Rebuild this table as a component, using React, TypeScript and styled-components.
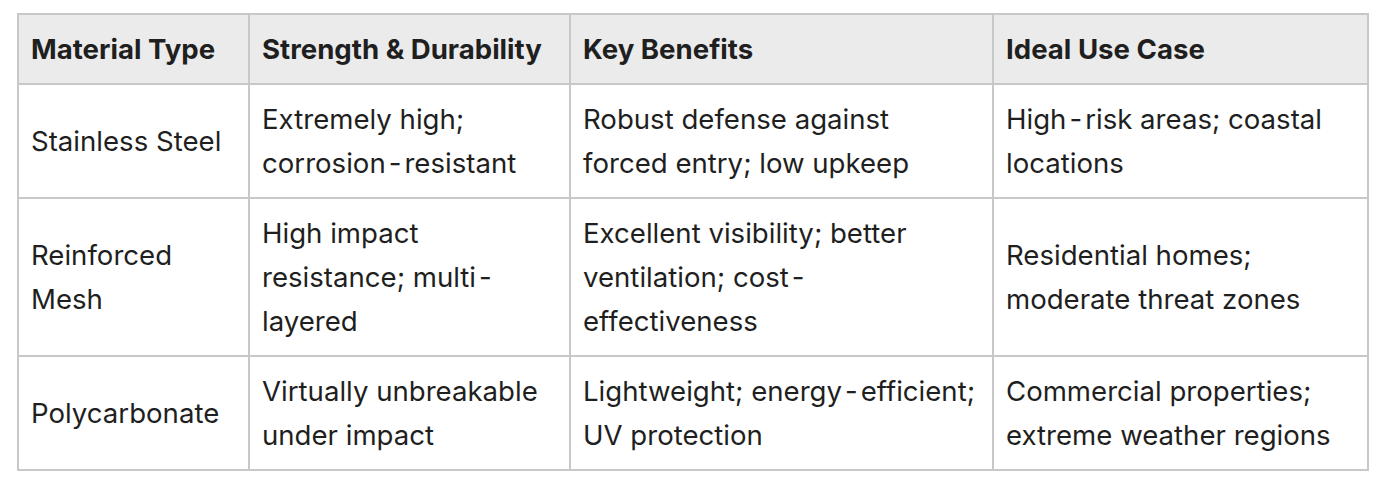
import React from 'react';
import styled, { createGlobalStyle } from 'styled-components';

const GlobalStyle = createGlobalStyle`
  body {
    margin: 0;
    background: #ffffff;
    font-family: Inter, "Noto Sans", sans-serif;
    color: #1f1f1f;
  }
`;

const Page = styled.div`
  padding: 13px 15px 8px 17px;
`;

const Table = styled.table`
  width: 1350px;
  border-collapse: collapse;
  table-layout: fixed;
  font-size: 27.6px;
  line-height: 44px;
`;

const HeadCell = styled.th`
  background: #ebebeb;
  border: 2px solid #c8c8c8;
  padding: 12px 12px;
  text-align: left;
  font-weight: 700;
  vertical-align: middle;
`;

const Cell = styled.td`
  border: 2px solid #c8c8c8;
  padding: 12px 12px;
  vertical-align: middle;
`;

const Dash = styled.span`
  padding: 0 3px;
`;

const columns = [231, 321, 423, 375];

const headers = ['Material Type', 'Strength & Durability', 'Key Benefits', 'Ideal Use Case'];

const rows = [
  ['Stainless Steel', 'Extremely high; corrosion-resistant', 'Robust defense against forced entry; low upkeep', 'High-risk areas; coastal locations'],
  ['Reinforced Mesh', 'High impact resistance; multi-layered', 'Excellent visibility; better ventilation; cost-effectiveness', 'Residential homes; moderate threat zones'],
  ['Polycarbonate', 'Virtually unbreakable under impact', 'Lightweight; energy-efficient; UV protection', 'Commercial properties; extreme weather regions'],
];

// the source renders its hyphens with a little air on both sides
function withDashes(text: string) {
  const parts = text.split('-');
  return parts.map((part, i) => (
    <React.Fragment key={i}>
      {part}
      {i < parts.length - 1 && <Dash>-</Dash>}
    </React.Fragment>
  ));
}

export default function App() {
  return (
    <Page>
      <GlobalStyle />
      <Table>
        <colgroup>
          {columns.map((w, i) => (
            <col key={i} style={{ width: w }} />
          ))}
        </colgroup>
        <thead>
          <tr>
            {headers.map((h) => (
              <HeadCell key={h}>{h}</HeadCell>
            ))}
          </tr>
        </thead>
        <tbody>
          {rows.map((row) => (
            <tr key={row[0]}>
              {row.map((cell, i) => (
                <Cell key={i}>{withDashes(cell)}</Cell>
              ))}
            </tr>
          ))}
        </tbody>
      </Table>
    </Page>
  );
}
